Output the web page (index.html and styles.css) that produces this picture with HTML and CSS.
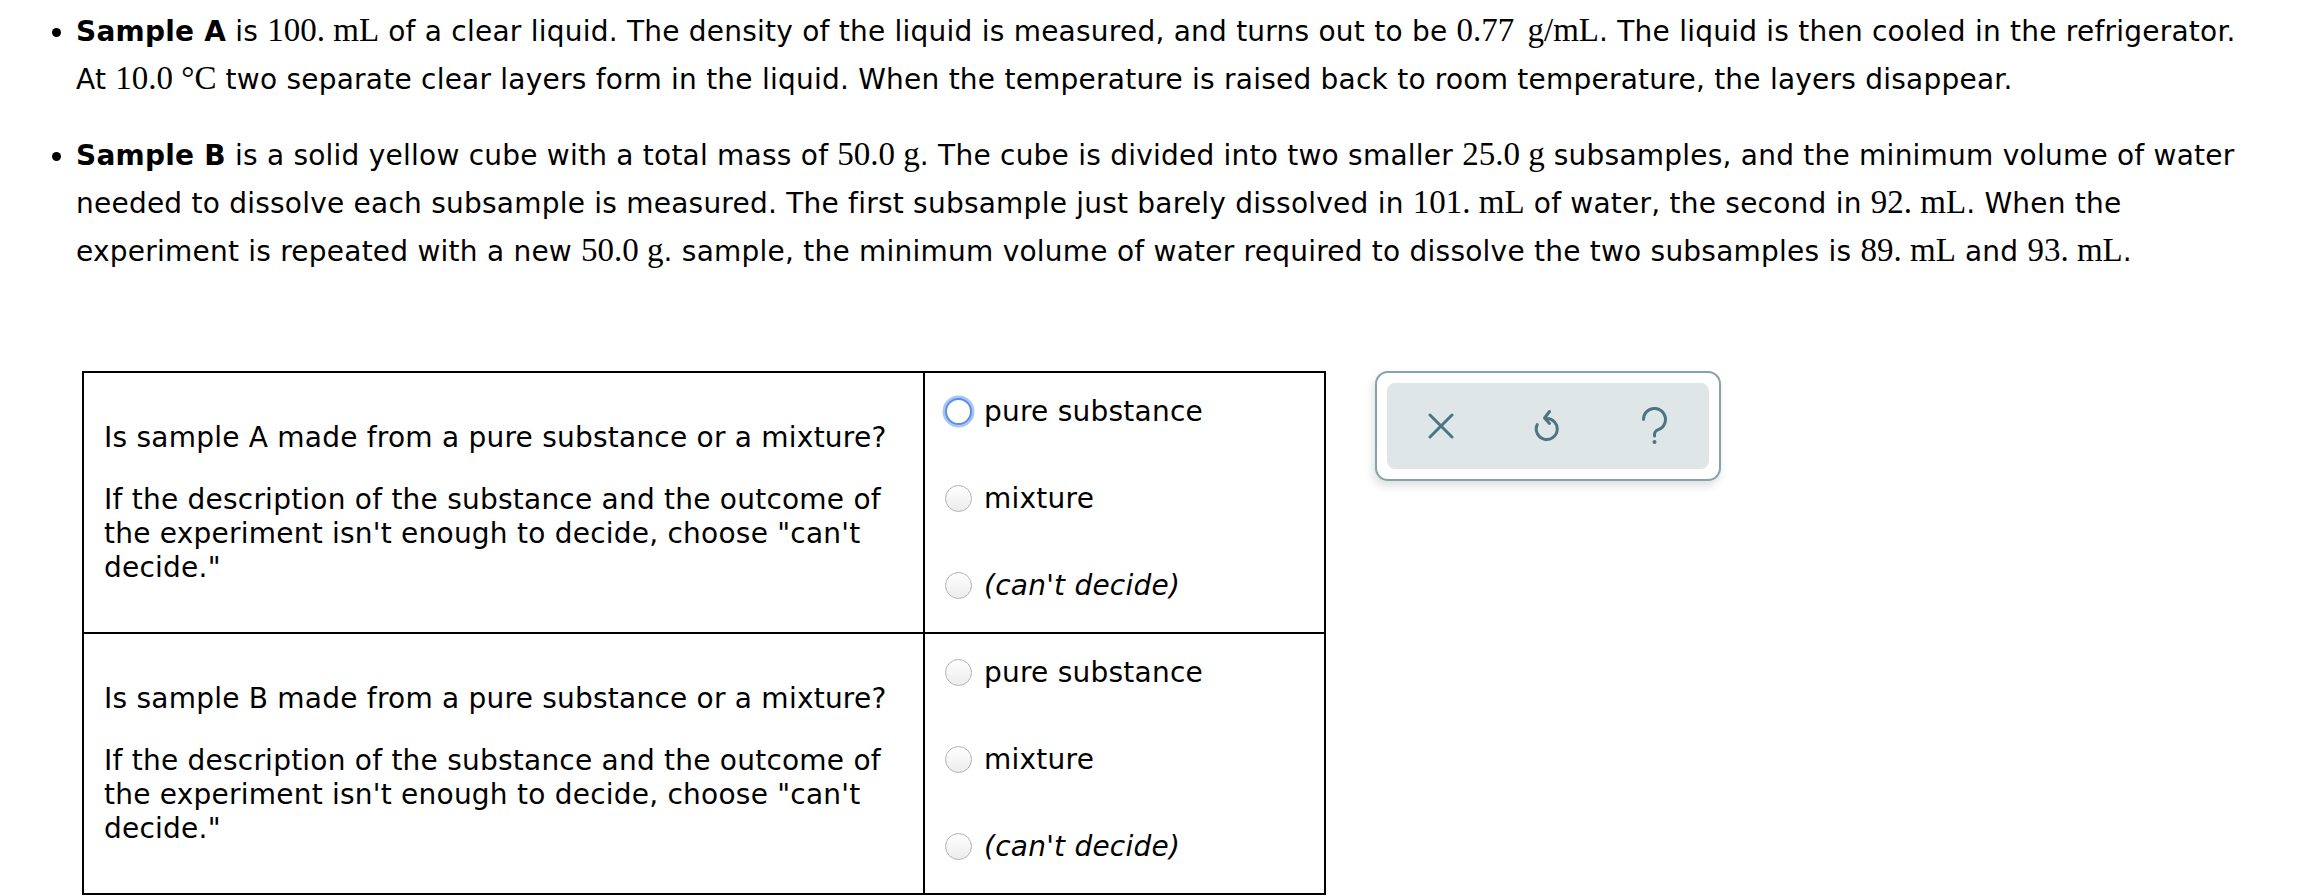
FILE: index.html
```html
<!DOCTYPE html>
<html lang="en">
<head>
<meta charset="utf-8">
<title>Pure substance or mixture</title>
<link rel="stylesheet" href="styles.css">
</head>
<body>
<ul class="samples">
  <li><b>Sample A</b> is <span class="m">100. mL</span> of a clear liquid. The density of the liquid is measured, and turns out to be <span class="m">0.77 <span class="thin"></span>g/mL</span>. The liquid is then cooled in the refrigerator. At <span class="m">10.0 °C</span> two separate clear layers form in the liquid. When the temperature is raised back to room temperature, the layers disappear.</li>
  <li><b>Sample B</b> is a solid yellow cube with a total mass of <span class="m">50.0 g</span>. The cube is divided into two smaller <span class="m">25.0 g</span> subsamples, and the minimum volume of water needed to dissolve each subsample is measured. The first subsample just barely dissolved in <span class="m">101. mL</span> of water, the second in <span class="m">92. mL</span>. When the experiment is repeated with a new <span class="m">50.0 g</span>. sample, the minimum volume of water required to dissolve the two subsamples is <span class="m">89. mL</span> and <span class="m">93. mL</span>.</li>
</ul>

<div class="work">
  <table class="qtable">
    <colgroup><col class="col-q"><col class="col-a"></colgroup>
    <tr>
      <td class="qcell">
        <p>Is sample A made from a pure substance or a mixture?</p>
        <p class="note">If the description of the substance and the outcome of the experiment isn't enough to decide, choose "can't decide."</p>
      </td>
      <td class="acell">
        <div class="opts">
          <div class="opt"><span class="radio focus"></span><span>pure substance</span></div>
          <div class="opt"><span class="radio"></span><span>mixture</span></div>
          <div class="opt"><span class="radio"></span><span class="it">(can't decide)</span></div>
        </div>
      </td>
    </tr>
    <tr>
      <td class="qcell">
        <p>Is sample B made from a pure substance or a mixture?</p>
        <p class="note">If the description of the substance and the outcome of the experiment isn't enough to decide, choose "can't decide."</p>
      </td>
      <td class="acell">
        <div class="opts">
          <div class="opt"><span class="radio"></span><span>pure substance</span></div>
          <div class="opt"><span class="radio"></span><span>mixture</span></div>
          <div class="opt"><span class="radio"></span><span class="it">(can't decide)</span></div>
        </div>
      </td>
    </tr>
  </table>

  <div class="toolbar">
    <div class="tools">
      <span class="tool" title="Clear">
        <svg width="26" height="26" viewBox="0 0 26 26"><path d="M2 2 L24 24 M24 2 L2 24" fill="none" stroke="currentColor" stroke-width="3" stroke-linecap="round"/></svg>
      </span>
      <span class="tool" title="Undo">
        <svg width="28" height="36" viewBox="0 0 28 36"><path d="M12.5 10.5 A10.5 10.5 0 1 1 3.2 16.6" fill="none" stroke="currentColor" stroke-width="3" stroke-linecap="round"/><path d="M15.5 3.5 L10.5 10 L15.5 15.5" fill="none" stroke="currentColor" stroke-width="3" stroke-linecap="round" stroke-linejoin="round"/></svg>
      </span>
      <span class="tool" title="Help">
        <svg width="28" height="38" viewBox="0 0 28 38"><path d="M2.5 12.5 A11 11 0 1 1 16.5 23 Q13.5 24.5 13.5 27.5 V29" fill="none" stroke="currentColor" stroke-width="3" stroke-linecap="round"/><circle cx="13.5" cy="35" r="2" fill="currentColor"/></svg>
      </span>
    </div>
  </div>
</div>
</body>
</html>
```

FILE: styles.css
```css
body {
  margin: 8px;
  font-family: "DejaVu Sans", Verdana, sans-serif;
  font-size: 28px;
  letter-spacing: 0.23px;
  color: #000;
  background: #fff;
}

.samples {
  margin: 0 22px 0 0;
  padding-left: 68px;
  line-height: 48px;
}

.samples li + li {
  margin-top: 28px;
}

.m {
  font-family: "Liberation Serif", "Times New Roman", serif;
  font-size: 33px;
  line-height: 1;
  letter-spacing: 0;
}

.thin {
  display: inline-block;
  width: 5px;
}

.work {
  display: flex;
  align-items: flex-start;
  gap: 49px;
  margin: 95px 0 0 74px;
}

.qtable {
  border-collapse: collapse;
  border: 2px solid #000;
  table-layout: fixed;
  width: 1242px;
}

.col-q { width: 841px; }
.col-a { width: 401px; }

.qtable td {
  border: 2px solid #000;
  vertical-align: middle;
  height: 259px;
  padding: 0 20px;
  line-height: 34px;
}

.qcell p {
  margin: 0;
}

.qcell p.note {
  margin-top: 28px;
}

.opts {
  display: flex;
  flex-direction: column;
  gap: 53px;
  padding-bottom: 8px;
}

.opt {
  display: flex;
  align-items: center;
  gap: 12px;
  height: 34px;
}

.it {
  font-style: italic;
}

.radio {
  flex: none;
  box-sizing: border-box;
  width: 27px;
  height: 27px;
  border-radius: 50%;
  border: 1.5px solid #b3b3b3;
  background: linear-gradient(#ffffff, #ececec);
}

.radio.focus {
  border: 2px solid #5b8fe4;
  background: #fff;
  box-shadow: 0 0 0 2.5px #a8c5f6;
}

.toolbar {
  box-sizing: border-box;
  width: 346px;
  height: 110px;
  padding: 10px;
  border: 2px solid #86a2aa;
  border-radius: 13px;
  background: #fff;
  box-shadow: -2px 5px 10px rgba(0, 0, 0, 0.13);
}

.tools {
  height: 100%;
  border-radius: 8px;
  background: #dfe6e8;
  display: grid;
  grid-template-columns: repeat(3, 107px);
  justify-content: center;
  align-items: center;
  color: #4c7582;
}

.tool {
  display: flex;
  justify-content: center;
  align-items: center;
}

.tool svg {
  display: block;
}
```
